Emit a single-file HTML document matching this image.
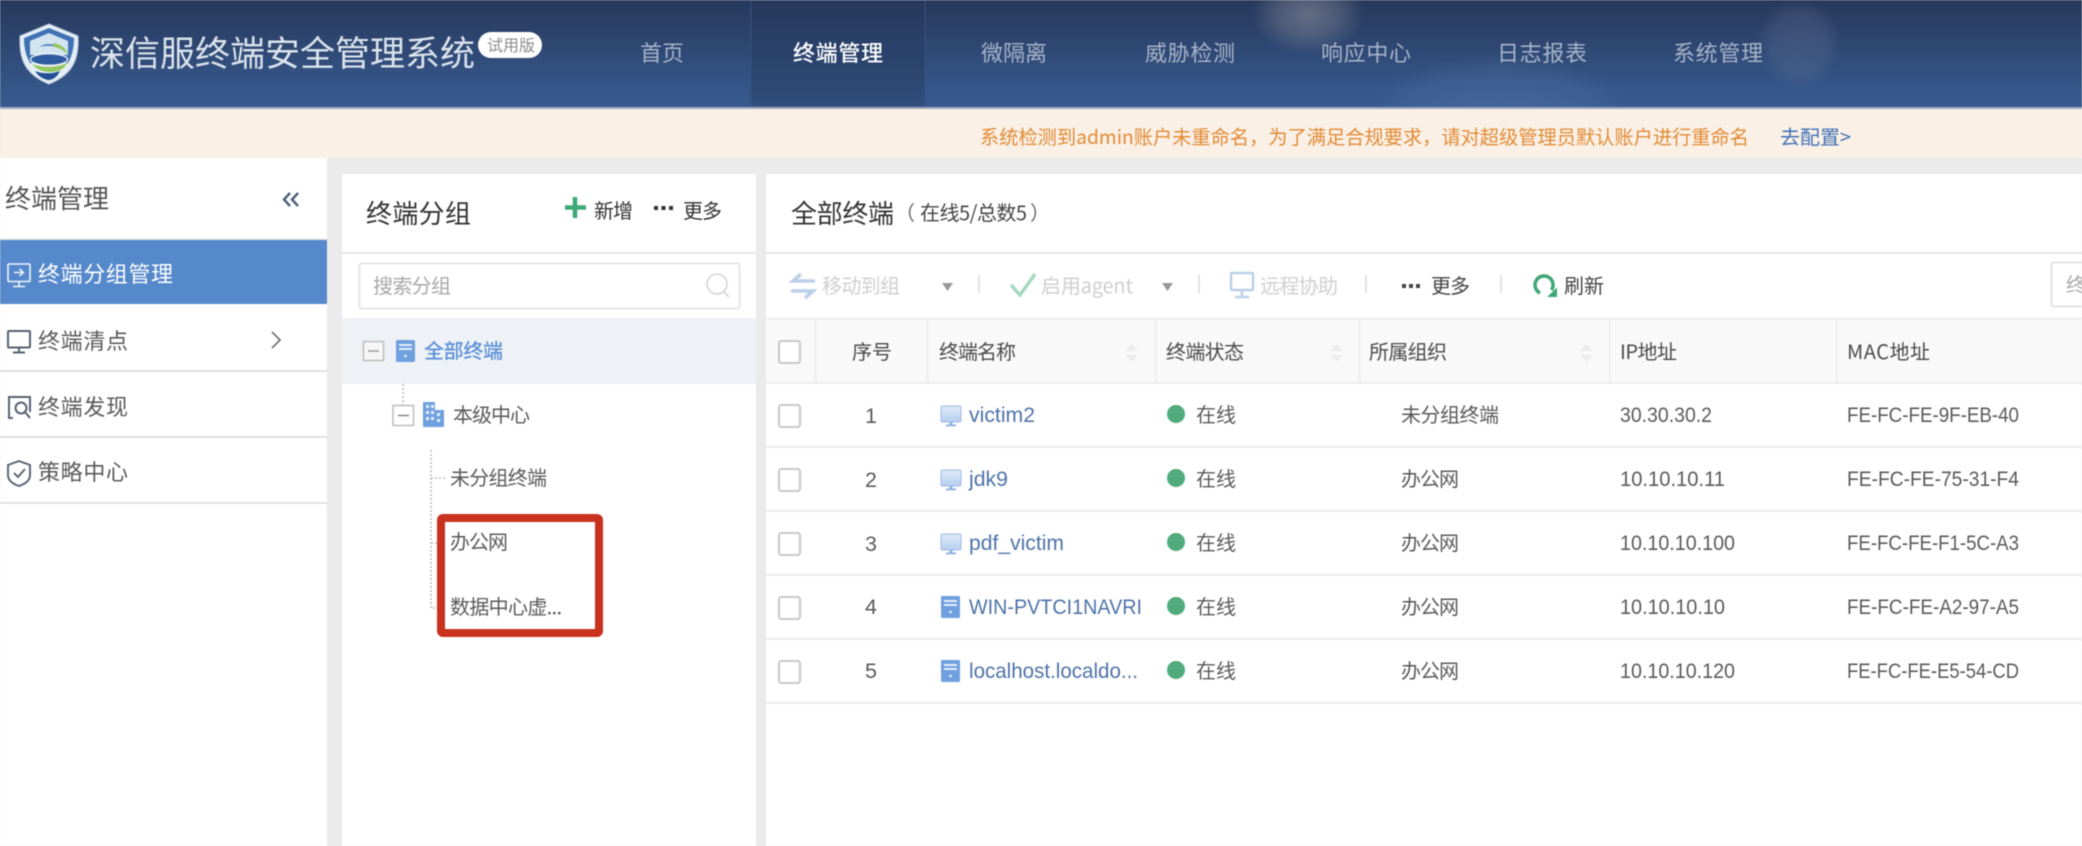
<!DOCTYPE html>
<html lang="zh-CN"><head><meta charset="utf-8"><title>深信服终端安全管理系统</title>
<style>
html,body{margin:0;padding:0;width:2082px;height:846px;overflow:hidden;background:#ebebeb}
svg{display:block;filter:blur(.6px)}
text{font-family:"Liberation Sans","Noto Sans CJK SC",sans-serif;font-size:21.5px;fill:#5a5a5a}
.c{font-family:"Noto Sans CJK SC","Liberation Sans",sans-serif;font-size:20px}
.nav{font-size:22px;fill:#a7b4c8}
.dis{fill:#cfcfcf}
.th{fill:#4a4a4a}
.lnk{fill:#4f73a8}
</style></head><body>
<svg width="2082" height="846" viewBox="0 0 2082 846" xmlns="http://www.w3.org/2000/svg">
<defs>
<linearGradient id="hd" x1="0" y1="0" x2="0" y2="1"><stop offset="0" stop-color="#27395b"/><stop offset=".85" stop-color="#36578b"/><stop offset="1" stop-color="#37598d"/></linearGradient>
<linearGradient id="act" x1="0" y1="0" x2="0" y2="1"><stop offset="0" stop-color="#25385a"/><stop offset="1" stop-color="#304d7c"/></linearGradient>
<radialGradient id="b1"><stop offset="0" stop-color="#8a8c9c" stop-opacity=".6"/><stop offset=".55" stop-color="#8a8c9c" stop-opacity=".35"/><stop offset="1" stop-color="#8a8c9c" stop-opacity="0"/></radialGradient>
<radialGradient id="b2"><stop offset="0" stop-color="#7f8cab" stop-opacity=".22"/><stop offset=".65" stop-color="#7f8cab" stop-opacity=".17"/><stop offset="1" stop-color="#7f8cab" stop-opacity="0"/></radialGradient>
<radialGradient id="b3"><stop offset="0" stop-color="#6f8fbf" stop-opacity=".22"/><stop offset=".7" stop-color="#6f8fbf" stop-opacity=".14"/><stop offset="1" stop-color="#6f8fbf" stop-opacity="0"/></radialGradient>
<linearGradient id="mon" x1="0" y1="0" x2="0" y2="1"><stop offset="0" stop-color="#e2ecf8"/><stop offset="1" stop-color="#b5cdec"/></linearGradient>
<g id="pc"><rect x="0" y="0" width="20" height="16" rx="1.5" fill="url(#mon)" stroke="#a9c4e8" stroke-width="1.2"/><rect x="8.5" y="16" width="3" height="3" fill="#8fb1de"/><rect x="5" y="18.5" width="10" height="1.8" fill="#8fb1de"/></g>
<g id="srv"><rect x="0" y="0" width="19" height="22" rx="1" fill="#6fa0df"/><rect x="3" y="4" width="13" height="2" fill="#e6effa"/><rect x="3" y="8" width="13" height="2" fill="#e6effa"/><circle cx="9.5" cy="16" r="1.4" fill="#e6effa"/></g>
<rect id="cb" width="21" height="22" rx="2" fill="#fff" stroke="#c2c2c2" stroke-width="1.8"/>
<g id="sort"><path d="M0 7 L6.5 0 L13 7Z M0 11 L6.5 18 L13 11Z" fill="#ececec"/></g>
</defs>

<!-- header -->
<rect width="2082" height="107" fill="url(#hd)"/>
<ellipse cx="1308" cy="14" rx="56" ry="40" fill="url(#b1)"/>
<ellipse cx="1799" cy="44" rx="42" ry="46" fill="url(#b2)"/>
<ellipse cx="1500" cy="106" rx="125" ry="50" fill="url(#b3)"/>
<rect x="751" y="0" width="174" height="106" fill="url(#act)" stroke="#38527f" stroke-width="1"/>
<rect y="107" width="2082" height="2" fill="#9ea8bb"/>

<!-- logo -->
<path d="M49 24 L78 36 C79 58 74 74 49 84 C24 74 19 58 20 36 Z" fill="#e4edf4" stroke="#bccde0" stroke-width="1"/>
<path d="M49 28 L74 38 C74 48 72 56 68 63 L30 63 C26 56 24 48 24 38 Z" fill="#3f72b5"/>
<path d="M49 33 L68 41 L68 55 L30 55 L30 41 Z" fill="#d2e4f0"/>
<path d="M30 63 H68 C64 72 57 78 49 81 C41 78 34 72 30 63Z" fill="#e6eef5"/>
<path d="M40 47 C44 43 53 43 57 47 C52 45.500 45 45.500 40 47Z" fill="#4f86c0"/>
<path d="M53 43 C61 44 67 49 68 55 C64 50 59 48 54 47Z" fill="#93c75f"/>
<ellipse cx="49" cy="59.500" rx="18.500" ry="5.800" fill="#2f5ea0" stroke="#f2f6fa" stroke-width="1.300"/>
<path d="M32 64 C42 68 56 68 67 63 C64 70 57 72 50 72 C42 72 36 69 32 64Z" fill="#93c75f"/>
<path d="M35 71 C43 74 52 74 60 71 C57 77 53 80 48 80 C43 79 38 76 35 71Z" fill="#234f97"/>

<text class="c" x="90" y="66" style="font-size:35px;fill:#dbe3ec" textLength="385" lengthAdjust="spacingAndGlyphs">深信服终端安全管理系统</text>
<rect x="478" y="32" width="64" height="26" rx="13" fill="#fff"/>
<text class="c" x="487" y="51" style="font-size:16px;fill:#8d8d8d" textLength="48" lengthAdjust="spacingAndGlyphs">试用版</text>

<text class="c nav" x="640" y="61" textLength="44">首页</text>
<text class="c nav" x="793" y="61" style="fill:#fff;font-weight:500" textLength="90">终端管理</text>
<text class="c nav" x="981" y="61" textLength="66">微隔离</text>
<text class="c nav" x="1145" y="61" textLength="90">威胁检测</text>
<text class="c nav" x="1321" y="61" textLength="90">响应中心</text>
<text class="c nav" x="1497" y="61" textLength="90">日志报表</text>
<text class="c nav" x="1673" y="61" textLength="90">系统管理</text>

<!-- banner -->
<rect y="109" width="2082" height="49" fill="#faf0e6"/>
<text class="c" x="980" y="144" style="fill:#e28b35;font-size:19.5px" textLength="769" lengthAdjust="spacingAndGlyphs">系统检测到admin账户未重命名，为了满足合规要求，请对超级管理员默认账户进行重命名</text>
<text class="c" x="1780" y="144" style="fill:#3f70b6;font-size:19.5px" textLength="71" lengthAdjust="spacingAndGlyphs">去配置&gt;</text>

<!-- sidebar -->
<rect x="0" y="158" width="327" height="688" fill="#fff"/>
<text class="c" x="5" y="208" style="font-size:26px;fill:#555" textLength="104">终端管理</text>
<path d="M290 193 L284 199.5 L290 206 M298 193 L292 199.5 L298 206" fill="none" stroke="#4d5f78" stroke-width="2.4"/>
<rect x="0" y="238.500" width="327" height="1.500" fill="#e3e3e3"/>
<rect x="0" y="240" width="327" height="64" fill="#5689cc"/>
<g fill="none" stroke="#eef4fb" stroke-width="1.600"><rect x="8" y="264" width="22" height="17.500" rx="1"/><path d="M19 281.500 V286 M13 286.500 H25"/><path d="M14 272.500 H23 M19.500 269 L23.500 272.500 L19.500 276" stroke-width="1.500"/></g>
<text class="c" x="38" y="282" style="font-size:22px;fill:#fff" textLength="135">终端分组管理</text>
<g fill="none" stroke="#566173" stroke-width="2"><rect x="8" y="331" width="22" height="16.500" rx="1"/><path d="M19 347.500 V352 M13 352.500 H25"/></g>
<text class="c" x="38" y="349" style="font-size:22px" textLength="90">终端清点</text>
<path d="M272 332 L280 340 L272 348" fill="none" stroke="#777" stroke-width="1.800"/>
<rect x="0" y="370" width="327" height="2" fill="#e3e3e3"/>
<g fill="none" stroke="#566173" stroke-width="2"><path d="M13 418 H9 V397 H30 V412"/><circle cx="21" cy="408" r="5.500"/><path d="M25 412 L30 418"/></g>
<text class="c" x="38" y="415" style="font-size:22px" textLength="90">终端发现</text>
<rect x="0" y="436" width="327" height="2" fill="#e3e3e3"/>
<g fill="none" stroke="#566173" stroke-width="1.900"><path d="M19 461 L30 465 V475 C30 481 25 484 19 486 C13 484 8 481 8 475 V465 Z"/><path d="M14 473 L18 477 L25 469"/></g>
<text class="c" x="38" y="480" style="font-size:22px" textLength="90">策略中心</text>
<rect x="0" y="502" width="327" height="2" fill="#e3e3e3"/>

<!-- tree panel -->
<rect x="342" y="174" width="414" height="672" fill="#fff"/>
<text class="c" x="366" y="223" style="font-size:26px;fill:#333" textLength="105">终端分组</text>
<path d="M575 197 V218 M565 207.500 H586" stroke="#3fa877" stroke-width="4.500" fill="none"/>
<text class="c" x="594" y="218" style="fill:#333" textLength="39">新增</text>
<g fill="#333"><rect x="654" y="206" width="4" height="4"/><rect x="661.500" y="206" width="4" height="4"/><rect x="669" y="206" width="4" height="4"/></g>
<text class="c" x="683" y="218" style="fill:#333" textLength="39">更多</text>
<rect x="342" y="252" width="414" height="2" fill="#e6e6e6"/>
<rect x="359.500" y="263.500" width="380" height="45" rx="2" fill="#fff" stroke="#e0e0e0" stroke-width="1.500"/>
<text class="c" x="373" y="293" style="fill:#a8a8a8" textLength="78">搜索分组</text>
<circle cx="717" cy="284" r="10" fill="none" stroke="#d4d4d4" stroke-width="1.500"/><path d="M724 292 L729 297" stroke="#d4d4d4" stroke-width="1.500"/>
<rect x="342" y="318" width="414" height="66" fill="#eef2f7"/>
<rect x="363.500" y="341.500" width="20" height="19" fill="#f6f6f6" stroke="#bdbdbd" stroke-width="1.500"/><path d="M368 351 H379" stroke="#999" stroke-width="1.500"/>
<use href="#srv" x="396" y="340"/>
<text class="c" x="424" y="358" style="fill:#5b8fd6;font-weight:500" textLength="79">全部终端</text>
<path d="M403 384 V405" stroke="#bbb" stroke-width="1.500" stroke-dasharray="2 2"/>
<rect x="393" y="405.500" width="20.500" height="20" fill="#fff" stroke="#bdbdbd" stroke-width="1.500"/><path d="M398 415.500 H409" stroke="#888" stroke-width="1.500"/>
<g><path d="M423 402 H435 V410 H444 V427 H423Z" fill="#6fa0df"/><g fill="#e6effa"><rect x="426" y="405" width="3" height="3"/><rect x="431" y="405" width="3" height="3"/><rect x="426" y="411" width="3" height="3"/><rect x="431" y="411" width="3" height="3"/><rect x="437" y="413" width="3" height="3"/><rect x="426" y="417" width="3" height="3"/><rect x="431" y="417" width="3" height="3"/><rect x="437" y="419" width="3" height="3"/></g></g>
<text class="c" x="453" y="422" textLength="77">本级中心</text>
<path d="M431 450 V608 H445 M431 478 H445 M431 543 H440" fill="none" stroke="#bbb" stroke-width="1.500" stroke-dasharray="2 2"/>
<text class="c" x="450" y="485" textLength="97">未分组终端</text>
<text class="c" x="450" y="549" textLength="58">办公网</text>
<text class="c" x="450" y="614" textLength="112">数据中心虚...</text>
<rect x="441" y="518" width="158" height="115" rx="2" fill="none" stroke="#c9321f" stroke-width="8"/>

<!-- main panel -->
<rect x="766" y="174" width="1316" height="672" fill="#fff"/>
<text class="c" x="791" y="223" style="font-size:26px;fill:#333" textLength="103">全部终端</text>
<text class="c" x="895" y="220" style="fill:#666">（</text>
<text class="c" x="920" y="220" style="fill:#444" textLength="107">在线5/总数5</text>
<text class="c" x="1030" y="220" style="fill:#666">）</text>
<rect x="766" y="252" width="1316" height="2" fill="#e6e6e6"/>

<!-- toolbar -->
<path d="M815 281 H793 L801 274 M791 291 H813 L805 298" fill="none" stroke="#bcd0ea" stroke-width="3.500"/>
<text class="c dis" x="822" y="293" textLength="78">移动到组</text>
<path d="M942 283 H953 L947.500 291Z" fill="#999"/><rect x="978" y="275" width="2" height="18" fill="#e2e2e2"/>
<path d="M1011 285 L1020 295 L1035 274" fill="none" stroke="#a6d8c0" stroke-width="3.500"/>
<text class="c dis" x="1041" y="293" textLength="92">启用agent</text>
<path d="M1162 283 H1173 L1167.500 291Z" fill="#999"/><rect x="1198" y="275" width="2" height="18" fill="#e2e2e2"/>
<g fill="none" stroke="#bcd0ea" stroke-width="2.500"><rect x="1231" y="273" width="22" height="17" rx="1"/><path d="M1242 290 V296 M1235 297 H1249"/></g>
<text class="c dis" x="1260" y="293" textLength="78">远程协助</text>
<rect x="1365" y="275" width="2" height="18" fill="#e2e2e2"/>
<g fill="#444"><rect x="1402" y="284" width="4" height="4"/><rect x="1409" y="284" width="4" height="4"/><rect x="1416" y="284" width="4" height="4"/></g>
<text class="c" x="1431" y="293" style="fill:#444" textLength="39">更多</text>
<rect x="1500" y="275" width="2" height="18" fill="#e2e2e2"/>
<path d="M1540 293 A9 9 0 1 1 1551.500 290" fill="none" stroke="#3fa877" stroke-width="3.500"/><path d="M1547 297 H1557 V287.500Z" fill="#3fa877"/>
<text class="c" x="1564" y="293" style="fill:#444" textLength="40">刷新</text>
<rect x="2051.500" y="262.500" width="40" height="44" rx="2" fill="#fff" stroke="#dcdcdc" stroke-width="1.500"/>
<text class="c" x="2066" y="292" style="fill:#aaa">终</text>

<!-- table head -->
<rect x="766" y="319" width="1316" height="63" fill="#f9f9f9"/>
<rect x="766" y="318" width="1316" height="1.500" fill="#ececec"/>
<g fill="#ececec"><rect x="815" y="319" width="1.500" height="63"/><rect x="927" y="319" width="1.500" height="63"/><rect x="1155" y="319" width="1.500" height="63"/><rect x="1359" y="319" width="1.500" height="63"/><rect x="1609" y="319" width="1.500" height="63"/><rect x="1836" y="319" width="1.500" height="63"/></g>
<use href="#cb" x="779" y="341"/>
<text class="c th" x="852" y="359" textLength="40">序号</text>
<text class="c th" x="939" y="359" textLength="77">终端名称</text><use href="#sort" x="1125" y="344"/>
<text class="c th" x="1166" y="359" textLength="78">终端状态</text><use href="#sort" x="1330" y="344"/>
<text class="c th" x="1369" y="359" textLength="78">所属组织</text><use href="#sort" x="1580" y="344"/>
<text class="c th" x="1620" y="359" textLength="57">IP地址</text>
<text class="c th" x="1847" y="359" textLength="83">MAC地址</text>

<!-- row lines -->
<g fill="#ededed"><rect x="766" y="382" width="1316" height="2"/><rect x="766" y="446" width="1316" height="2"/><rect x="766" y="510" width="1316" height="2"/><rect x="766" y="574" width="1316" height="2"/><rect x="766" y="638" width="1316" height="2"/><rect x="766" y="702" width="1316" height="2"/></g>

<!-- row 1 -->
<use href="#cb" x="779" y="405"/><text x="865" y="423">1</text><use href="#pc" x="941" y="406"/>
<text class="lnk" x="969" y="422" textLength="66" lengthAdjust="spacingAndGlyphs">victim2</text>
<circle cx="1176" cy="414" r="9" fill="#52a97d"/><text class="c" x="1196" y="422" textLength="40">在线</text>
<text class="c" x="1401" y="422" textLength="98">未分组终端</text>
<text x="1620" y="422" textLength="92" lengthAdjust="spacingAndGlyphs">30.30.30.2</text>
<text x="1847" y="422" textLength="172" lengthAdjust="spacingAndGlyphs">FE-FC-FE-9F-EB-40</text>
<!-- row 2 -->
<use href="#cb" x="779" y="469"/><text x="865" y="487">2</text><use href="#pc" x="941" y="470"/>
<text class="lnk" x="969" y="486" textLength="39" lengthAdjust="spacingAndGlyphs">jdk9</text>
<circle cx="1176" cy="478" r="9" fill="#52a97d"/><text class="c" x="1196" y="486" textLength="40">在线</text>
<text class="c" x="1401" y="486" textLength="58">办公网</text>
<text x="1620" y="486" textLength="105" lengthAdjust="spacingAndGlyphs">10.10.10.11</text>
<text x="1847" y="486" textLength="172" lengthAdjust="spacingAndGlyphs">FE-FC-FE-75-31-F4</text>
<!-- row 3 -->
<use href="#cb" x="779" y="533"/><text x="865" y="551">3</text><use href="#pc" x="941" y="534"/>
<text class="lnk" x="969" y="550" textLength="95" lengthAdjust="spacingAndGlyphs">pdf_victim</text>
<circle cx="1176" cy="542" r="9" fill="#52a97d"/><text class="c" x="1196" y="550" textLength="40">在线</text>
<text class="c" x="1401" y="550" textLength="58">办公网</text>
<text x="1620" y="550" textLength="115" lengthAdjust="spacingAndGlyphs">10.10.10.100</text>
<text x="1847" y="550" textLength="172" lengthAdjust="spacingAndGlyphs">FE-FC-FE-F1-5C-A3</text>
<!-- row 4 -->
<use href="#cb" x="779" y="597"/><text x="865" y="614">4</text><use href="#srv" x="941" y="596"/>
<text class="lnk" x="969" y="614" textLength="173" lengthAdjust="spacingAndGlyphs">WIN-PVTCI1NAVRI</text>
<circle cx="1176" cy="606" r="9" fill="#52a97d"/><text class="c" x="1196" y="614" textLength="40">在线</text>
<text class="c" x="1401" y="614" textLength="58">办公网</text>
<text x="1620" y="614" textLength="105" lengthAdjust="spacingAndGlyphs">10.10.10.10</text>
<text x="1847" y="614" textLength="172" lengthAdjust="spacingAndGlyphs">FE-FC-FE-A2-97-A5</text>
<!-- row 5 -->
<use href="#cb" x="779" y="661"/><text x="865" y="678">5</text><use href="#srv" x="941" y="660"/>
<text class="lnk" x="969" y="678" textLength="169" lengthAdjust="spacingAndGlyphs">localhost.localdo...</text>
<circle cx="1176" cy="670" r="9" fill="#52a97d"/><text class="c" x="1196" y="678" textLength="40">在线</text>
<text class="c" x="1401" y="678" textLength="58">办公网</text>
<text x="1620" y="678" textLength="115" lengthAdjust="spacingAndGlyphs">10.10.10.120</text>
<text x="1847" y="678" textLength="172" lengthAdjust="spacingAndGlyphs">FE-FC-FE-E5-54-CD</text>
</svg>
</body></html>
